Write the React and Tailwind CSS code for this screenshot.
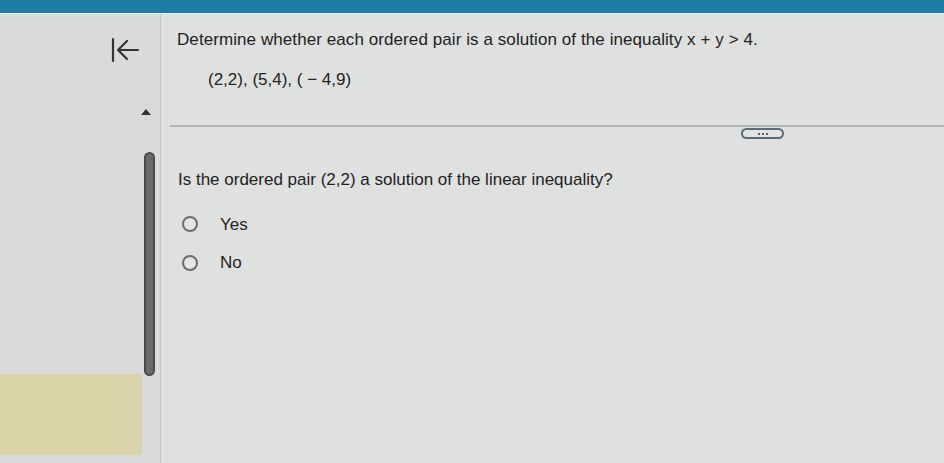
export default function App() {
  return (
    <div className="w-[944px] h-[463px] overflow-hidden bg-[#dfe0e0] flex flex-col" style={{ fontFamily: '"Liberation Sans", Arial, sans-serif' }}>
      <div className="h-[14px] bg-[#1f7aa5] shrink-0 border-b border-[#eef0f0]" />
      <div className="flex flex-1">
        <div className="w-[161px] shrink-0 bg-[#d9dada] border-r border-[#c4c6c6] flex flex-col">
          <div className="flex justify-end pr-[20px] pt-[23px]">
            <svg width="30" height="26" viewBox="0 0 30 26" fill="none" stroke="#333" strokeWidth="2.2" strokeLinecap="round" strokeLinejoin="round">
              <line x1="3" y1="2" x2="3" y2="24" />
              <line x1="9" y1="13" x2="28" y2="13" />
              <polyline points="17,4 8,13 17,22" />
            </svg>
          </div>
          <div className="flex justify-end pr-[9px] pt-[46px]">
            <div className="w-0 h-0 border-l-[5px] border-r-[5px] border-b-[6px] border-l-transparent border-r-transparent border-b-[#333]" />
          </div>
          <div className="flex justify-end pr-[5px] pt-[37px]">
            <div className="w-[11px] h-[224px] rounded-full bg-[#6a6a6c] border-2 border-[#4a4a4a]" />
          </div>
          <div className="mt-[-2px] w-[142px] h-[81px] bg-[#dbd3a8]" />
        </div>
        <div className="flex-1 flex flex-col">
          <div className="pl-[16px] pt-[13px] text-[17px] text-[#222] tracking-[0.08px]">
            Determine whether each ordered pair is a solution of the inequality x + y &gt; 4.
          </div>
          <div className="pl-[47px] pt-[14px] text-[17px] text-[#222]">(2,2), (5,4), ( − 4,9)</div>
          <div className="relative mt-[29px] ml-[9px] h-[20px]">
            <div className="absolute left-0 right-0 top-[4px] h-[2px] bg-[#b4b6b6]" />
            <div className="absolute left-[571px] top-[7px] w-[43px] h-[11px] rounded-full border-2 border-[#5c6a78] bg-[#e2e3e3] flex items-center justify-center gap-[2px]">
              <span className="w-[2px] h-[2px] bg-[#333] rounded-full" />
              <span className="w-[2px] h-[2px] bg-[#333] rounded-full" />
              <span className="w-[2px] h-[2px] bg-[#333] rounded-full" />
            </div>
          </div>
          <div className="pl-[17px] pt-[26px] text-[17px] text-[#222]">
            Is the ordered pair (2,2) a solution of the linear inequality?
          </div>
          <div className="pl-[21px] pt-[19px] flex flex-col gap-[13px]">
            <label className="flex items-center gap-[22px] text-[17px] text-[#222]">
              <span className="w-[16px] h-[16px] rounded-full border-2 border-[#6b6e70] bg-[#e4e5e5]" />
              Yes
            </label>
            <label className="flex items-center gap-[22px] text-[17px] text-[#222]">
              <span className="w-[16px] h-[16px] rounded-full border-2 border-[#6b6e70] bg-[#e4e5e5]" />
              No
            </label>
          </div>
        </div>
      </div>
    </div>
  );
}
